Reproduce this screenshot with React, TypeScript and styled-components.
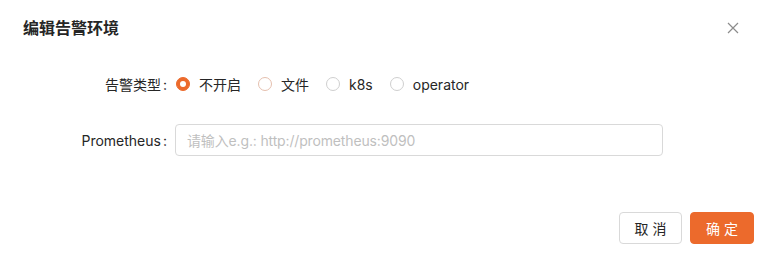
import React, { useState } from 'react';
import styled, { createGlobalStyle } from 'styled-components';

const GlobalStyle = createGlobalStyle`
  html, body {
    margin: 0;
    padding: 0;
    background: #ffffff;
  }
  body {
    font-family: 'Inter', 'Noto Sans CJK SC', sans-serif;
    font-size: 14px;
    color: rgba(0, 0, 0, 0.85);
  }
  * {
    box-sizing: border-box;
  }
`;

const Modal = styled.div`
  width: 772px;
  height: 256px;
  background: #ffffff;
  display: flex;
  flex-direction: column;
`;

const Header = styled.div`
  height: 56px;
  padding: 0 27px 0 23px;
  display: flex;
  align-items: center;
  justify-content: space-between;
`;

const Title = styled.h3`
  margin: 0;
  font-size: 16px;
  font-weight: 700;
  line-height: 24px;
  color: #262626;
`;

const CloseButton = styled.button`
  width: 24px;
  height: 24px;
  padding: 0;
  border: none;
  background: transparent;
  display: flex;
  align-items: center;
  justify-content: center;
  cursor: pointer;
`;

const Body = styled.div`
  padding-top: 12px;
  display: flex;
  flex-direction: column;
  gap: 24px;
`;

const FormRow = styled.div`
  display: grid;
  grid-template-columns: 175px 488px;
  align-items: center;
  height: 32px;
`;

const Label = styled.label`
  text-align: right;
  color: #262626;
  white-space: nowrap;

  &::after {
    content: ':';
    margin: 0 8px 0 2px;
  }
`;

const RadioGroup = styled.div`
  display: flex;
  align-items: center;
  gap: 17px;
  padding-left: 1px;
`;

const RadioItem = styled.label`
  display: flex;
  align-items: center;
  gap: 9px;
  cursor: pointer;
  color: #262626;
`;

const RadioDot = styled.span<{ $checked: boolean; $hover?: boolean }>`
  width: 14px;
  height: 14px;
  border-radius: 50%;
  border: 1px solid ${(p) => (p.$checked ? '#ec6a2c' : p.$hover ? '#e5bfae' : '#cfcfcf')};
  background: ${(p) => (p.$checked ? '#ec6a2c' : '#ffffff')};
  display: flex;
  align-items: center;
  justify-content: center;

  &::after {
    content: '';
    width: 6px;
    height: 6px;
    border-radius: 50%;
    background: #ffffff;
    display: ${(p) => (p.$checked ? 'block' : 'none')};
  }
`;

const Input = styled.input`
  width: 488px;
  height: 32px;
  padding: 0 11px;
  border: 1px solid #d9d9d9;
  border-radius: 4px;
  font-family: 'Inter', 'Noto Sans CJK SC', sans-serif;
  font-size: 14px;
  letter-spacing: -0.15px;
  color: #262626;
  outline: none;

  &::placeholder {
    color: #bfbfbf;
  }
`;

const Footer = styled.div`
  margin-top: auto;
  padding: 0 18px 12px 0;
  display: flex;
  justify-content: flex-end;
  gap: 8px;
`;

const Button = styled.button<{ $primary?: boolean }>`
  height: 32px;
  width: ${(p) => (p.$primary ? '64px' : '63px')};
  border-radius: 4px;
  border: 1px solid ${(p) => (p.$primary ? '#ec6a2c' : '#d9d9d9')};
  background: ${(p) => (p.$primary ? '#ec6a2c' : '#ffffff')};
  color: ${(p) => (p.$primary ? '#ffffff' : '#262626')};
  font-family: 'Noto Sans CJK SC', sans-serif;
  font-size: 14px;
  letter-spacing: 4px;
  padding: 0 0 0 4px;
  cursor: pointer;
`;

const options = ['不开启', '文件', 'k8s', 'operator'];

export default function App() {
  const [type, setType] = useState('不开启');

  return (
    <>
      <GlobalStyle />
      <Modal>
        <Header>
          <Title>编辑告警环境</Title>
          <CloseButton aria-label="close">
            <svg width="12" height="12" viewBox="0 0 12 12">
              <path d="M1 1L11 11M11 1L1 11" stroke="#8c8c8c" strokeWidth="1.2" fill="none" />
            </svg>
          </CloseButton>
        </Header>
        <Body>
          <FormRow>
            <Label>告警类型</Label>
            <RadioGroup>
              {options.map((o) => (
                <RadioItem key={o} onClick={() => setType(o)}>
                  <RadioDot $checked={type === o} $hover={o === '文件'} />
                  {o}
                </RadioItem>
              ))}
            </RadioGroup>
          </FormRow>
          <FormRow>
            <Label>Prometheus</Label>
            <Input placeholder="请输入e.g.: http://prometheus:9090" />
          </FormRow>
        </Body>
        <Footer>
          <Button>取消</Button>
          <Button $primary>确定</Button>
        </Footer>
      </Modal>
    </>
  );
}
